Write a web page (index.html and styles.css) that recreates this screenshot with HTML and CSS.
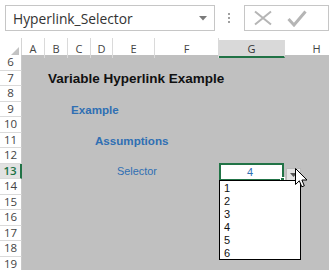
FILE: index.html
```html
<!DOCTYPE html>
<html>
<head>
<meta charset="utf-8">
<link rel="stylesheet" href="styles.css">
</head>
<body>
<div class="app">
  <div class="topbar">
    <div class="namebox">
      <span class="name">Hyperlink_Selector</span>
      <svg class="nb-arrow" width="8" height="5" viewBox="0 0 8 5"><path d="M0 0 H8 L4 4.5 Z" fill="#7a7a7a"/></svg>
    </div>
    <div class="dots"><i></i><i></i><i></i></div>
    <div class="fbtns">
      <svg class="ico-x" width="20" height="16" viewBox="0 0 20 16"><path d="M2 1.5 L18 14.5 M18 1.5 L2 14.5" stroke="#b5b5b5" stroke-width="2" fill="none"/></svg>
      <svg class="ico-ok" width="20" height="17" viewBox="0 0 20 17"><path d="M1.5 9 L7 15 L18.5 1.5" stroke="#b5b5b5" stroke-width="3" fill="none"/></svg>
    </div>
  </div>

  <div class="colhdr">
    <div class="corner"><svg width="8" height="8" viewBox="0 0 8 8"><path d="M8 0 V8 H0 Z" fill="#c3c3c3"/></svg></div>
    <div class="ch">A</div><div class="ch">B</div><div class="ch">C</div><div class="ch">D</div>
    <div class="ch">E</div><div class="ch">F</div><div class="ch ch-sel">G</div><div class="ch">H</div>
  </div>

  <div class="sheet">
    <div class="row"><div class="rh">6</div></div>
    <div class="row"><div class="rh">7</div><div class="txt at-b title">Variable Hyperlink Example</div></div>
    <div class="row"><div class="rh">8</div></div>
    <div class="row"><div class="rh">9</div><div class="txt at-c head">Example</div></div>
    <div class="row"><div class="rh">10</div></div>
    <div class="row"><div class="rh">11</div><div class="txt at-d head">Assumptions</div></div>
    <div class="row"><div class="rh">12</div></div>
    <div class="row"><div class="rh rh-sel">13</div><div class="txt at-e label">Selector</div><div class="selcell">4<i class="handle"></i></div></div>
    <div class="row"><div class="rh">14</div></div>
    <div class="row"><div class="rh">15</div></div>
    <div class="row"><div class="rh">16</div></div>
    <div class="row"><div class="rh">17</div></div>
    <div class="row"><div class="rh">18</div></div>
    <div class="row"><div class="rh">19</div></div>
  </div>

  <div class="ddbtn"><svg width="7" height="4" viewBox="0 0 7 4"><path d="M0 0 H7 L3.5 4 Z" fill="#555"/></svg></div>
  <ul class="ddlist">
    <li>1</li><li>2</li><li>3</li><li>4</li><li>5</li><li>6</li>
  </ul>
  <svg class="cursor" width="13" height="21" viewBox="0 0 13 21"><path d="M0.5 0.5 V16.5 L4.3 12.8 L6.8 18.8 L9.3 17.8 L6.9 12 H12 Z" fill="#fff" stroke="#000" stroke-width="1" stroke-linejoin="miter"/></svg>
</div>
</body>
</html>
```

FILE: styles.css
```css
* { box-sizing: border-box; }
html, body { margin: 0; padding: 0; background: #fff; }
.app {
  position: relative;
  width: 329px;
  height: 270px;
  overflow: hidden;
  font-family: "Liberation Sans", Arial, sans-serif;
  --cols: 22px 23px 23px 23px 22px 42px 64px 66px 64px;
}

/* top formula bar */
.topbar {
  height: 38px;
  display: flex;
  align-items: flex-start;
  padding-top: 5px;
  padding-left: 5px;
  background: #fff;
}
.namebox {
  width: 222px;
  height: 26px;
  border: 1px solid #c6c6c6;
  display: flex;
  align-items: center;
  padding-left: 7px;
  padding-right: 7px;
  font-family: "Open Sans", "Noto Sans", sans-serif;
  font-size: 13.8px;
  color: #333;
}
.name { flex: 1; white-space: nowrap; }
.nb-arrow { display: block; margin-top: 1px; }
.dots {
  width: 31px;
  height: 26px;
  display: flex;
  flex-direction: column;
  align-items: center;
  justify-content: center;
  gap: 2px;
}
.dots i { display: block; width: 2px; height: 2px; background: #a0a0a0; }
.fbtns {
  width: 90px;
  height: 26px;
  border: 1px solid #c6c6c6;
  display: flex;
  align-items: center;
  padding-left: 8px;
  gap: 14px;
}
.fbtns svg { display: block; }

/* column headers */
.colhdr {
  display: grid;
  grid-template-columns: var(--cols);
  height: 17px;
  background: #fff;
  font-family: "Open Sans", "Noto Sans", sans-serif;
  font-size: 11px;
  color: #444;
}
.corner {
  border-right: 1px solid #d4d4d4;
  display: flex;
  align-items: flex-end;
  justify-content: flex-end;
  padding: 0 2px 3px 0;
}
.corner svg { display: block; }
.ch {
  border-right: 1px solid #dadada;
  display: flex;
  align-items: center;
  justify-content: center;
  padding-top: 1px;
}
.ch-sel {
  background: #d9d9d9;
  border-bottom: 2px solid #217346;
  color: #333;
  margin-top: 2px;
}

/* sheet rows */
.sheet { background: #c0c0c0; }
.row {
  display: grid;
  grid-template-columns: var(--cols);
  height: 15.5px;
  background: #c0c0c0;
}
.rh {
  grid-column: 1;
  background: #fff;
  border-bottom: 1px solid #dadada;
  border-right: 1px solid #c8c8c8;
  font-family: "Open Sans", "Noto Sans", sans-serif;
  font-size: 11.5px;
  color: #444;
  text-align: center;
  line-height: 14.5px;
}
.rh-sel {
  background: #e2e2e2;
  color: #217346;
  border-right: 2px solid #217346;
  font-weight: 600;
}
.txt {
  grid-row: 1;
  white-space: nowrap;
  padding-left: 3px;
  line-height: 15.5px;
}
.at-b { grid-column: 3 / -1; }
.at-c { grid-column: 4 / -1; }
.at-d { grid-column: 5 / -1; padding-left: 4px; }
.at-e { grid-column: 6 / 7; padding-left: 4px; }
.title { font-weight: bold; font-size: 13.5px; color: #111; }
.head { font-weight: bold; font-size: 11.6px; color: #2f6fb3; }
.label { font-size: 10.9px; color: #2f6fb3; }

.selcell {
  grid-column: 8;
  grid-row: 1;
  position: relative;
  margin: -1px 1px -2px 0;
  border: 2px solid #217346;
  background: #fff;
  color: #2f6fb3;
  font-size: 11px;
  text-align: center;
  line-height: 14px;
  padding-right: 3px;
}
.handle {
  position: absolute;
  right: -3px;
  bottom: -3px;
  width: 5px;
  height: 5px;
  background: #217346;
  border: 1px solid #fff;
}

/* overlays: dropdown */
.ddbtn {
  position: absolute;
  left: 286px;
  top: 168px;
  width: 15px;
  height: 13px;
  background: #e3e3e3;
  border: 1px solid #b9b9b9;
  display: flex;
  align-items: center;
  justify-content: center;
}
.ddbtn svg { display: block; }
.ddlist {
  position: absolute;
  left: 219px;
  top: 180px;
  width: 82px;
  height: 80px;
  margin: 0;
  padding: 1px 0 0 4px;
  list-style: none;
  background: #fff;
  border: 1px solid #000;
  font-family: "Liberation Sans", Arial, sans-serif;
  font-size: 11px;
  color: #111;
}
.ddlist li { height: 13px; line-height: 13px; }
.cursor {
  position: absolute;
  left: 295px;
  top: 168px;
  display: block;
}
```
